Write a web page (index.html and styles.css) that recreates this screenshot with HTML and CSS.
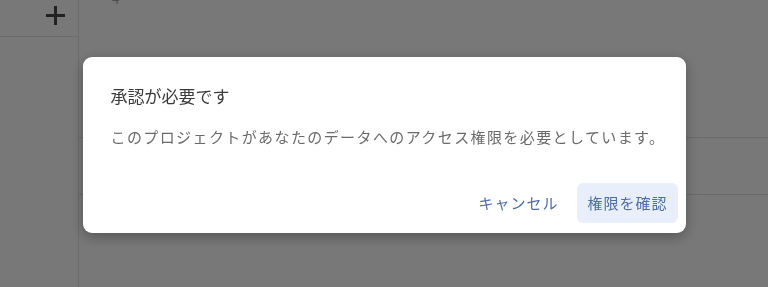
FILE: index.html
```html
<!DOCTYPE html>
<html lang="ja">
<head>
    <meta charset="UTF-8">
    <meta name="viewport" content="width=device-width, initial-scale=1.0">
    <title>承認が必要です</title>
    <link rel="stylesheet" href="styles.css">
</head>
<body>
    <div id="page">
        <div class="sidebar">
            <div class="sidebar-top">
                <span class="add-btn" title="追加"></span>
            </div>
        </div>
        <div class="main">
            <div class="main-head">4</div>
            <div class="main-row"></div>
        </div>
    </div>

    <div id="overlay">
        <div class="dialog">
            <h2 class="dialog-title">承認が必要です</h2>
            <p class="dialog-text">このプロジェクトがあなたのデータへのアクセス権限を必要としています。</p>
            <div class="dialog-actions">
                <button class="btn">キャンセル</button>
                <button class="btn btn-primary">権限を確認</button>
            </div>
        </div>
    </div>
</body>
</html>
```

FILE: styles.css
```css
/* General */
body {
    margin: 0;
    font-family: "Noto Sans CJK JP", "Noto Sans", sans-serif;
    background: #fff;
    overflow: hidden;
}

/* Page behind the dialog */
#page {
    display: flex;
    height: 287px;
}

.sidebar {
    width: 78px;
    border-right: 1px solid #e4e4e4;
}

.sidebar-top {
    height: 36px;
    border-bottom: 1px solid #e4e4e4;
    display: flex;
    justify-content: flex-end;
    align-items: center;
    padding-right: 13px;
}

/* plus sign drawn with two bars */
.add-btn {
    position: relative;
    width: 19px;
    height: 19px;
    margin-top: -6px;
}

.add-btn::before,
.add-btn::after {
    content: "";
    position: absolute;
    background: #4a4a4a;
}

.add-btn::before {
    left: 8px;
    top: 0;
    width: 3px;
    height: 19px;
}

.add-btn::after {
    left: 0;
    top: 8px;
    width: 19px;
    height: 3px;
}

.main {
    flex: 1;
}

.main-head {
    margin-top: -8px;
    padding-left: 33px;
    height: 145px;
    font-size: 13px;
    line-height: 14px;
    color: #a4a4a4;
    border-bottom: 1px solid #e4e4e4;
}

.main-row {
    height: 56px;
    border-bottom: 1px solid #e4e4e4;
}

/* Overlay + dialog */
#overlay {
    position: fixed;
    inset: 0;
    background: rgba(0, 0, 0, 0.53);
    display: flex;
    align-items: center;
    justify-content: center;
}

.dialog {
    width: 603px;
    box-sizing: border-box;
    background: #fff;
    border-radius: 9px;
    padding: 27px 8px 10px 28px;
    box-shadow: 0 4px 14px rgba(0, 0, 0, 0.3);
    margin-top: 2px;
}

.dialog-title {
    margin: 0;
    font-size: 17px;
    font-weight: 400;
    line-height: 24px;
    color: #3a3a3a;
}

.dialog-text {
    margin: 17px 0 0;
    font-size: 15px;
    letter-spacing: 1.4px;
    line-height: 24px;
    color: #6a6a6a;
}

.dialog-actions {
    margin-top: 34px;
    display: flex;
    justify-content: flex-end;
    gap: 9px;
}

.btn {
    font-family: inherit;
    height: 40px;
    padding: 0 10px;
    font-size: 15px;
    letter-spacing: 1px;
    border: none;
    border-radius: 6px;
    background: transparent;
    color: #4a6ca8;
    cursor: pointer;
}

.btn-primary {
    background: #e9effa;
}
```
